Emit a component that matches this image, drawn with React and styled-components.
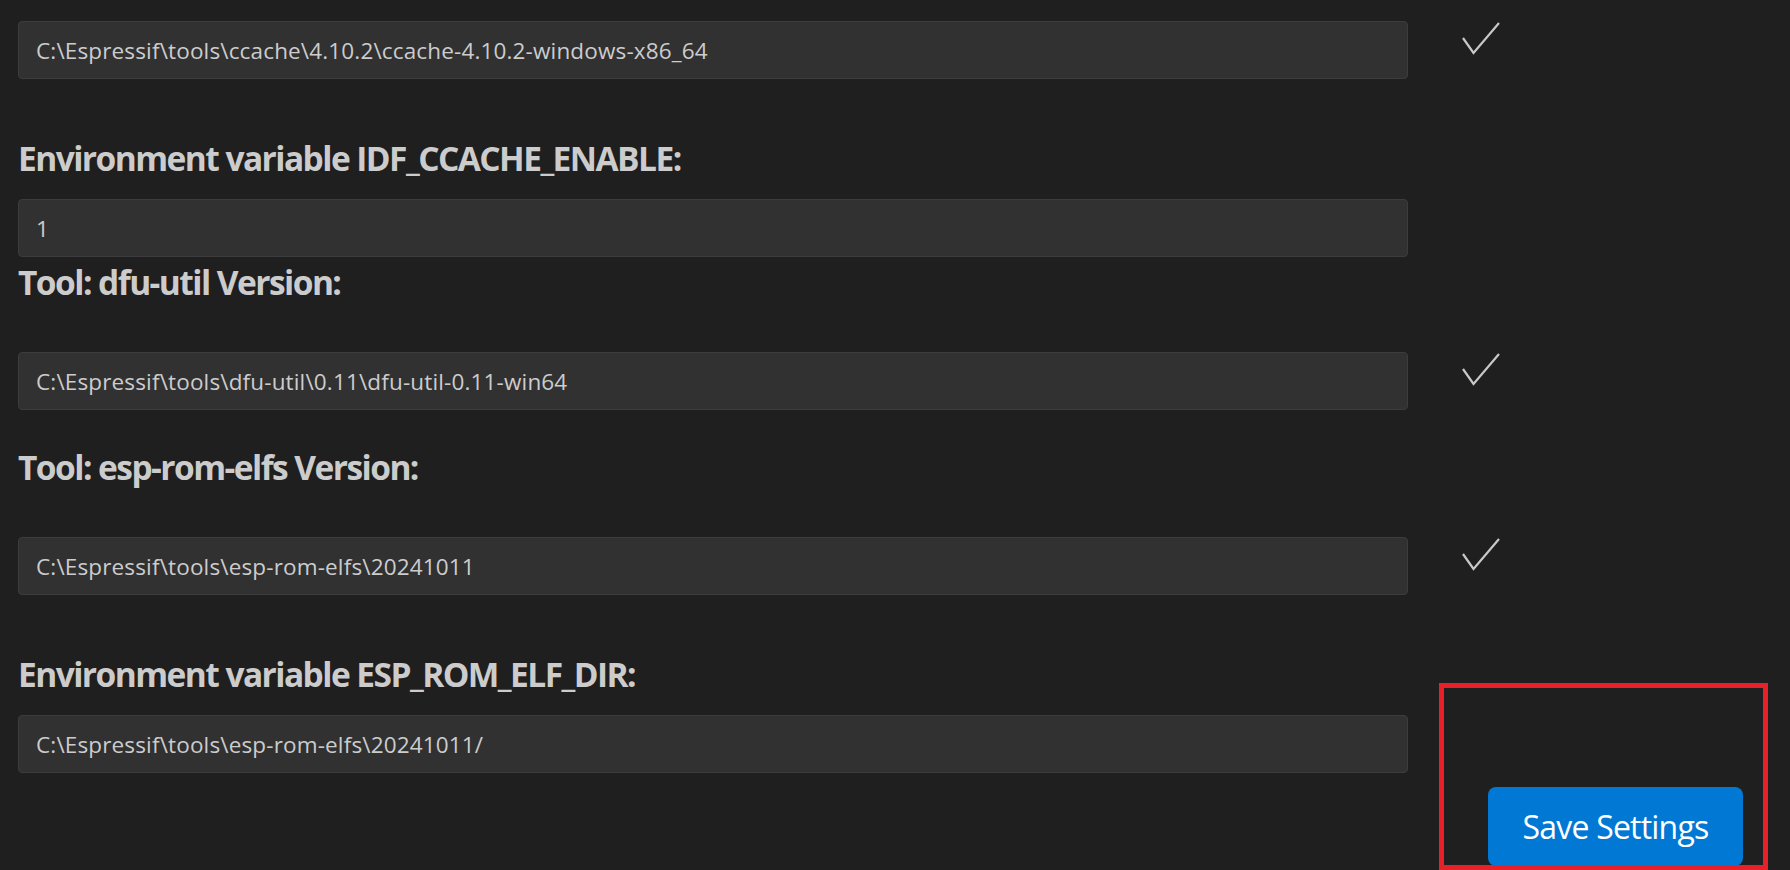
import React from 'react';
import styled, { createGlobalStyle } from 'styled-components';

const GlobalStyle = createGlobalStyle`
  html, body {
    margin: 0;
    padding: 0;
    background: #1f1f1f;
  }
  body {
    font-family: "Open Sans", "Noto Sans", sans-serif;
    color: #cccccc;
    overflow: hidden;
  }
`;

const Page = styled.div`
  position: relative;
  width: 1790px;
  height: 870px;
  box-sizing: border-box;
  padding: 21px 0 0 18px;
  overflow: hidden;
`;

const Heading = styled.h4`
  margin: ${props => props.$top}px 0 0;
  font-size: 33.5px;
  line-height: 40px;
  font-weight: 700;
  letter-spacing: -1.55px;
  color: #cccccc;
`;

const Row = styled.div`
  display: flex;
  align-items: flex-start;
  margin-top: ${props => props.$top || 0}px;
`;

const TextInput = styled.input`
  width: 1390px;
  height: 58px;
  box-sizing: border-box;
  padding: 0 17px;
  background: #313131;
  border: 1px solid #3c3c3c;
  border-radius: 4px;
  color: #cccccc;
  font-family: "Open Sans", "Noto Sans", sans-serif;
  font-size: 22.5px;
  letter-spacing: 0.15px;
  outline: none;
`;

const CheckMark = styled.svg`
  flex: none;
  margin-left: 54px;
  width: 38px;
  height: 34px;
`;

const Footer = styled.div`
  display: flex;
  justify-content: flex-end;
  padding-right: 47px;
  margin-top: 14px;
`;

const SaveButton = styled.button`
  width: 255px;
  height: 79px;
  border: none;
  border-radius: 8px;
  background: #0078d4;
  color: #ffffff;
  font-family: "Open Sans", "Noto Sans", sans-serif;
  font-size: 32px;
  letter-spacing: -0.8px;
  cursor: pointer;
`;

// red annotation frame drawn over the screenshot
const Highlight = styled.div`
  position: absolute;
  left: 1439px;
  top: 683px;
  width: 329px;
  height: 187px;
  box-sizing: border-box;
  border: 5px solid #e8202a;
  pointer-events: none;
`;

const Check = () => (
  <CheckMark viewBox="0 0 38 34">
    <polyline points="1,17 11.5,32 37,2" fill="none" stroke="#c8c8c8" strokeWidth="2.2" />
  </CheckMark>
);

const Field = ({ label, value, checked, top, gap }) => (
  <>
    {label && <Heading $top={top}>{label}</Heading>}
    <Row $top={label ? gap : 0}>
      <TextInput readOnly defaultValue={value} />
      {checked && <Check />}
    </Row>
  </>
);

const fields = [
  { value: 'C:\\Espressif\\tools\\ccache\\4.10.2\\ccache-4.10.2-windows-x86_64', checked: true },
  { label: 'Environment variable IDF_CCACHE_ENABLE:', value: '1', top: 59, gap: 21 },
  { label: 'Tool: dfu-util Version:', value: 'C:\\Espressif\\tools\\dfu-util\\0.11\\dfu-util-0.11-win64', checked: true, top: 5, gap: 50 },
  { label: 'Tool: esp-rom-elfs Version:', value: 'C:\\Espressif\\tools\\esp-rom-elfs\\20241011', checked: true, top: 37, gap: 50 },
  { label: 'Environment variable ESP_ROM_ELF_DIR:', value: 'C:\\Espressif\\tools\\esp-rom-elfs\\20241011/', top: 59, gap: 21 },
];

const App = () => (
  <Page>
    <GlobalStyle />
    {fields.map((f, i) => (
      <Field key={i} {...f} />
    ))}
    <Footer>
      <SaveButton>Save Settings</SaveButton>
    </Footer>
    <Highlight />
  </Page>
);

export default App;
